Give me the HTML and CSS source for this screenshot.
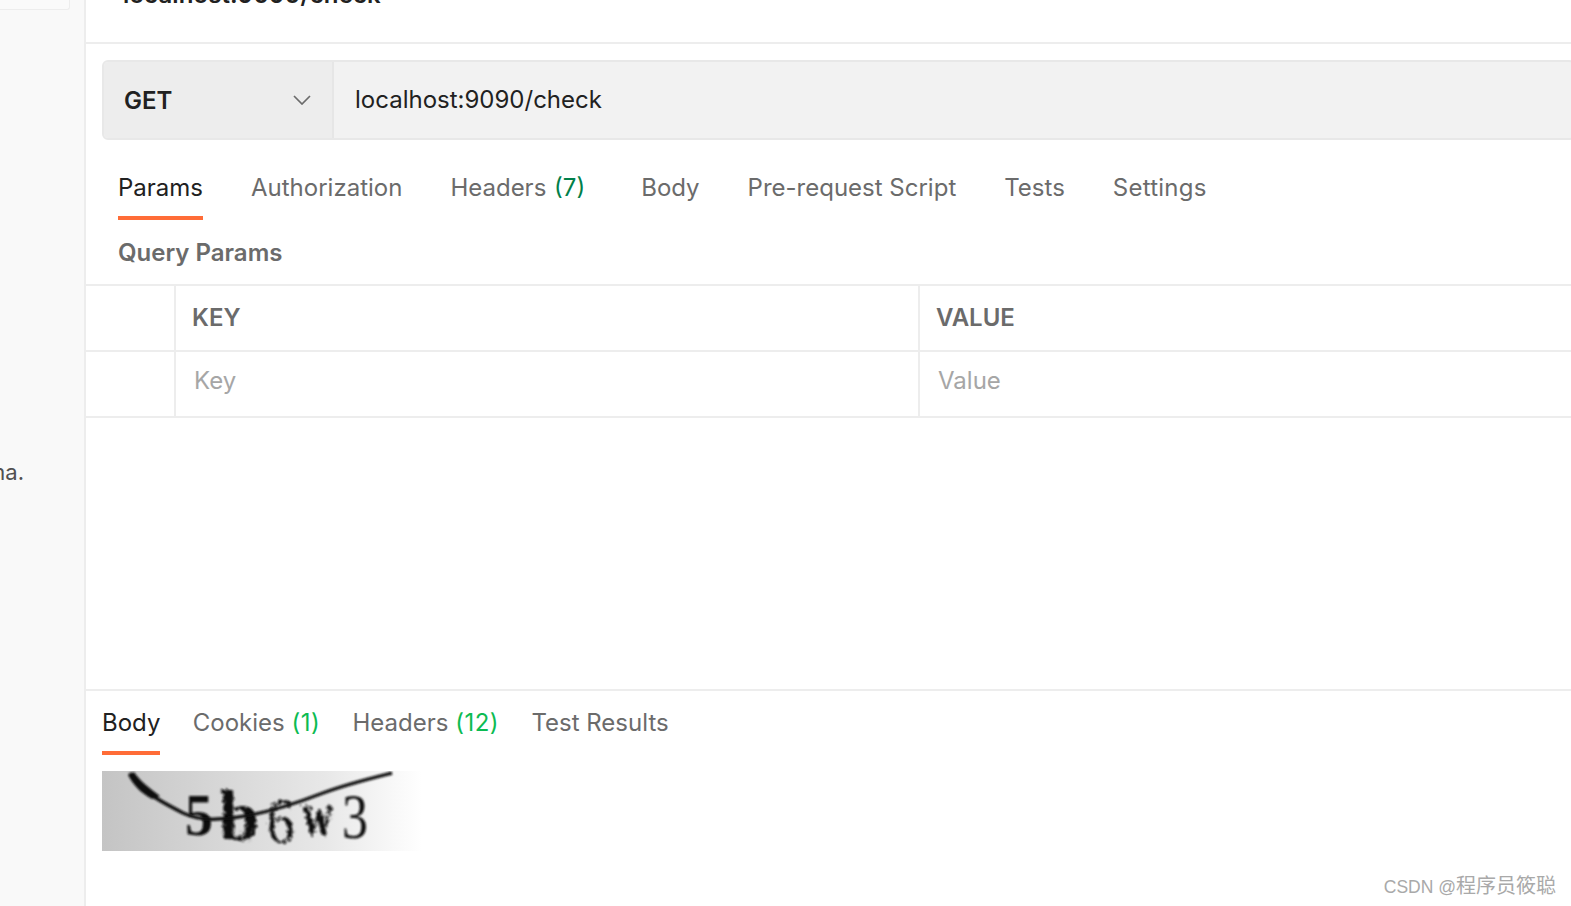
FILE: index.html
```html
<!DOCTYPE html>
<html lang="en">
<head>
<meta charset="utf-8">
<title>Postman request</title>
<link rel="stylesheet" href="styles.css">
</head>
<body>
<div class="app">
  <aside class="sidebar">
    <div class="side-box"></div>
    <div class="side-note"><span>schema.</span></div>
  </aside>
  <main class="main">
    <header class="title-bar"><span class="title">localhost:9090/check</span></header>
    <section class="url-bar">
      <div class="method"><span>GET</span>
        <svg class="chevron" width="18" height="10" viewBox="0 0 18 10"><path d="M1 1l8 8 8-8" fill="none" stroke="#6b6b6b" stroke-width="1.7"/></svg>
      </div>
      <div class="url">localhost:9090/check</div>
    </section>
    <nav class="tabs req-tabs">
      <span class="tab active">Params</span>
      <span class="tab">Authorization</span>
      <span class="tab tab-headers">Headers <em class="count-dark">(7)</em></span>
      <span class="tab">Body</span>
      <span class="tab">Pre-request Script</span>
      <span class="tab">Tests</span>
      <span class="tab tab-wide">Settings</span>
    </nav>
    <div class="query-title">Query Params</div>
    <div class="table">
      <div class="row head">
        <div class="cell check"></div>
        <div class="cell key">KEY</div>
        <div class="cell value">VALUE</div>
      </div>
      <div class="row ph">
        <div class="cell check"></div>
        <div class="cell key">Key</div>
        <div class="cell value">Value</div>
      </div>
    </div>
    <div class="spacer"></div>
    <section class="response">
      <nav class="tabs res-tabs">
        <span class="tab active">Body</span>
        <span class="tab">Cookies <em class="count">(1)</em></span>
        <span class="tab">Headers <em class="count">(12)</em></span>
        <span class="tab">Test Results</span>
      </nav>
      <div class="captcha-wrap">
        <svg class="captcha" width="320" height="80" viewBox="0 0 320 80">
          <defs>
            <linearGradient id="fade" x1="0" x2="1" y1="0" y2="0">
              <stop offset="0" stop-color="#c4c4c4"/>
              <stop offset="0.7" stop-color="#e8e8e8"/>
              <stop offset="1" stop-color="#ffffff"/>
            </linearGradient>
            <filter id="soft" x="-20%" y="-20%" width="140%" height="140%"><feGaussianBlur stdDeviation="0.8"/></filter>
            <filter id="rough" x="-20%" y="-20%" width="140%" height="140%">
              <feTurbulence type="fractalNoise" baseFrequency="0.35" numOctaves="2" seed="4"/>
              <feDisplacementMap in="SourceGraphic" scale="8"/>
              <feGaussianBlur stdDeviation="1"/>
            </filter>
          </defs>
          <rect width="320" height="80" fill="url(#fade)"/>
          <g filter="url(#soft)" class="cap-text">
            <text x="83" y="64" font-size="60" font-weight="700" textLength="28" lengthAdjust="spacingAndGlyphs">5</text>
            <text x="240" y="67" font-size="64" textLength="26" lengthAdjust="spacingAndGlyphs">3</text>
          </g>
          <g filter="url(#rough)" class="cap-text">
            <text x="117" y="69" font-size="72" font-weight="700" textLength="40" lengthAdjust="spacingAndGlyphs">b</text>
            <text x="165" y="72" font-size="66" textLength="27" lengthAdjust="spacingAndGlyphs">6</text>
            <text x="200" y="64" font-size="64" font-weight="700" textLength="31" lengthAdjust="spacingAndGlyphs">w</text>
          </g>
          <g filter="url(#soft)">
            <path d="M28 2C34 16 50 26 81 42C92 47 105 49 115 48C150 47 190 34 221 22C245 13 270 7 290 2" fill="none" stroke="#111" stroke-width="3.4"/>
            <path d="M26 4L32 1C38 10 46 16 58 25L50 28C38 22 30 12 26 4Z" fill="#111"/>
          </g>
        </svg>
      </div>
    </section>
  </main>
</div>
<div class="watermark"><span class="wm-latin">CSDN @</span>程序员筱聪</div>
</body>
</html>
```

FILE: styles.css
```css
* { box-sizing: border-box; }
html, body { margin: 0; height: 100%; overflow: hidden; }
body { font-family: Inter, "Noto Sans", sans-serif; color: #212121; background: #fff; position: relative; }
.app { display: flex; height: 906px; }

.sidebar { width: 86px; flex: none; background: #f9f9f9; border-right: 2px solid #ededed; overflow: hidden; }
.side-box { width: 70px; height: 10px; background: #fafafa; border: 1px solid #ededed; border-top: 0; border-left: 0; border-radius: 0 0 3px 0; }
.side-note { width: 24px; height: 28px; margin-top: 448px; display: flex; justify-content: flex-end; font-size: 22px; line-height: 28px; color: #505050; white-space: nowrap; }

.main { flex: 1; min-width: 0; display: flex; flex-direction: column; overflow: hidden; }

.title-bar { height: 44px; flex: none; border-bottom: 2px solid #ededed; overflow: hidden; }
.title { display: block; margin: -19px 0 0 37px; font-size: 24px; line-height: 28px; font-weight: 600; color: #212121; white-space: nowrap; letter-spacing: .1px; }

.url-bar { display: flex; height: 80px; flex: none; margin: 16px -4px 0 16px; background: #f2f2f2; border: 2px solid #e8e8e8; border-radius: 6px; }
.method { width: 230px; flex: none; display: flex; align-items: center; justify-content: space-between; padding: 0 21px 0 20px; background: #ededed; border-right: 2px solid #e6e6e6; border-radius: 4px 0 0 4px; font-size: 24px; font-weight: 600; color: #212121; }
.url { padding: 0 0 2px 21px; display: flex; align-items: center; font-size: 24px; color: #212121; }

.tabs { display: flex; flex: none; }
.tab { color: #6b6b6b; white-space: nowrap; font-size: 24px; line-height: 30px; }
.tab em { font-style: normal; }
.tab.active { color: #212121; }
.count-dark { color: #00804a; margin-left: 1px; }
.count { color: #0cbb52; letter-spacing: .5px; }
.tab-wide { letter-spacing: .25px; }

.req-tabs { height: 80px; margin-left: 32px; padding-top: 33px; gap: 48px; }
.req-tabs .tab { height: 47px; }
.req-tabs .tab.active { border-bottom: 4px solid #ff6c37; }
.tab-headers { margin-right: 8px; }

.query-title { height: 64px; flex: none; padding: 19px 0 0 32px; font-size: 24px; line-height: 28px; font-weight: 600; color: #6b6b6b; }

.table { flex: none; border-top: 2px solid #ededed; }
.row { display: flex; height: 66px; border-bottom: 2px solid #ededed; }
.cell { border-right: 2px solid #ededed; display: flex; align-items: center; font-size: 24px; }
.check { width: 90px; flex: none; }
.key { width: 744px; flex: none; padding-left: 16px; }
.value { flex: 1; border-right: 0; padding-left: 16px; }
.head .cell { font-weight: 600; color: #6b6b6b; padding-bottom: 2px; }
.ph .cell { color: #a6a6a6; padding-left: 18px; padding-bottom: 8px; }
.ph .check { padding-left: 0; }

.spacer { flex: 1; }

.response { height: 217px; flex: none; border-top: 2px solid #ededed; padding: 0 0 0 16px; }
.res-tabs { height: 64px; padding-top: 17px; gap: 32.3px; }
.res-tabs .tab { height: 47px; }
.res-tabs .tab.active { border-bottom: 4px solid #ff6c37; }
.captcha-wrap { padding-top: 16px; }
.captcha { display: block; }
.cap-text { font-family: "Liberation Serif", serif; fill: #111; }

.watermark { position: absolute; right: 15px; bottom: 6px; font-family: "Liberation Sans", "Noto Sans CJK SC", sans-serif; font-size: 20px; line-height: 26px; color: #a9a9a9; }
.wm-latin { font-size: 17.5px; }
```
